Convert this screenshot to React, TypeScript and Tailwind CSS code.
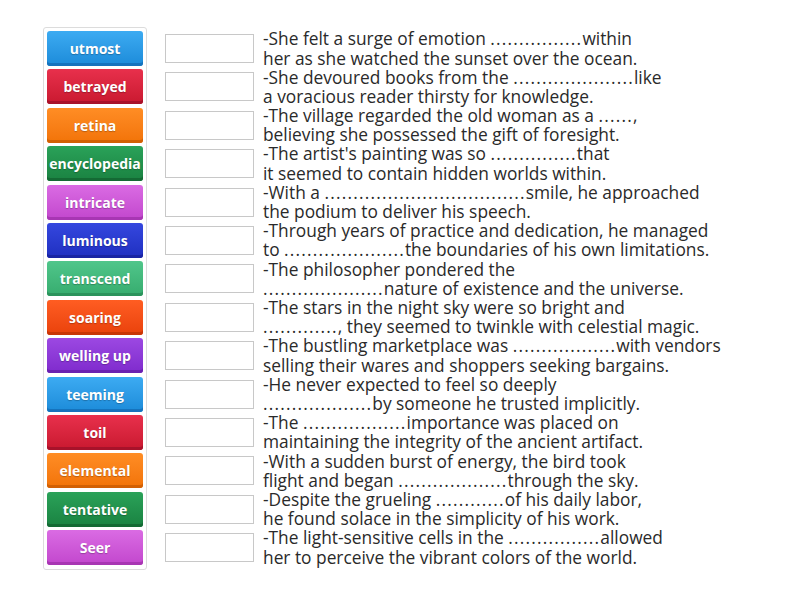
const tiles = [
  { word: 'utmost', cls: 'bg-gradient-to-b from-[#3cabf2] to-[#1b8bd9] shadow-[inset_0_-3px_0_#1573bd]' },
  { word: 'betrayed', cls: 'bg-gradient-to-b from-[#e8304c] to-[#c9182f] shadow-[inset_0_-3px_0_#a8122a]' },
  { word: 'retina', cls: 'bg-gradient-to-b from-[#ff8d24] to-[#f27306] shadow-[inset_0_-3px_0_#d26004]' },
  { word: 'encyclopedia', cls: 'bg-gradient-to-b from-[#2aa259] to-[#1a8241] shadow-[inset_0_-3px_0_#146a34]' },
  { word: 'intricate', cls: 'bg-gradient-to-b from-[#da6be3] to-[#c246cd] shadow-[inset_0_-3px_0_#a836b3]' },
  { word: 'luminous', cls: 'bg-gradient-to-b from-[#3547df] to-[#1f2fc0] shadow-[inset_0_-3px_0_#1924a3]' },
  { word: 'transcend', cls: 'bg-gradient-to-b from-[#50c68b] to-[#36ac6e] shadow-[inset_0_-3px_0_#2b935c]' },
  { word: 'soaring', cls: 'bg-gradient-to-b from-[#ff5d22] to-[#e9410a] shadow-[inset_0_-3px_0_#c93506]' },
  { word: 'welling up', cls: 'bg-gradient-to-b from-[#9c48e2] to-[#7f2acd] shadow-[inset_0_-3px_0_#6a20b0]' },
  { word: 'teeming', cls: 'bg-gradient-to-b from-[#3cabf2] to-[#1b8bd9] shadow-[inset_0_-3px_0_#1573bd]' },
  { word: 'toil', cls: 'bg-gradient-to-b from-[#e8304c] to-[#c9182f] shadow-[inset_0_-3px_0_#a8122a]' },
  { word: 'elemental', cls: 'bg-gradient-to-b from-[#ff8d24] to-[#f27306] shadow-[inset_0_-3px_0_#d26004]' },
  { word: 'tentative', cls: 'bg-gradient-to-b from-[#2aa259] to-[#1a8241] shadow-[inset_0_-3px_0_#146a34]' },
  { word: 'Seer', cls: 'bg-gradient-to-b from-[#da6be3] to-[#c246cd] shadow-[inset_0_-3px_0_#a836b3]' },
];

// a number stands for a run of blank dots
type Seg = string | number;

const sentences: [Seg[], Seg[]][] = [
  [['-She felt a surge of emotion ', 16, 'within'], ['her as she watched the sunset over the ocean.']],
  [['-She devoured books from the ', 21, 'like'], ['a voracious reader thirsty for knowledge.']],
  [['-The village regarded the old woman as a ', 6, ','], ['believing she possessed the gift of foresight.']],
  [["-The artist's painting was so ", 15, 'that'], ['it seemed to contain hidden worlds within.']],
  [['-With a ', 35, 'smile, he approached'], ['the podium to deliver his speech.']],
  [['-Through years of practice and dedication, he managed'], ['to ', 21, 'the boundaries of his own limitations.']],
  [['-The philosopher pondered the'], [21, 'nature of existence and the universe.']],
  [['-The stars in the night sky were so bright and'], [13, ', they seemed to twinkle with celestial magic.']],
  [['-The bustling marketplace was ', 18, 'with vendors'], ['selling their wares and shoppers seeking bargains.']],
  [['-He never expected to feel so deeply'], [19, 'by someone he trusted implicitly.']],
  [['-The ', 18, 'importance was placed on'], ['maintaining the integrity of the ancient artifact.']],
  [['-With a sudden burst of energy, the bird took'], ['flight and began ', 19, 'through the sky.']],
  [['-Despite the grueling ', 12, 'of his daily labor,'], ['he found solace in the simplicity of his work.']],
  [['-The light-sensitive cells in the ', 16, 'allowed'], ['her to perceive the vibrant colors of the world.']],
];

function Line({ segs }: { segs: Seg[] }) {
  return (
    <div>
      {segs.map((s, i) =>
        typeof s === 'number' ? (
          <span key={i} className="tracking-[1.2px]">
            {'.'.repeat(s)}
          </span>
        ) : (
          <span key={i}>{s}</span>
        )
      )}
    </div>
  );
}

export default function App() {
  return (
    <div className="w-[800px] h-[600px] bg-white font-['Open_Sans',sans-serif] flex items-start pl-[43px] pt-[27px]">
      {/* word tiles */}
      <div className="flex flex-col gap-[3.4px] w-[104px] border border-[#dcdcdc] rounded-[3px] px-[3px] pt-[3px] pb-[4px]">
        {tiles.map((t) => (
          <div
            key={t.word}
            className={`h-[35px] rounded-[3px] flex items-center justify-center text-white font-bold text-[14px] [text-shadow:0_1px_1px_rgba(0,0,0,0.25)] ${t.cls}`}
          >
            {t.word}
          </div>
        ))}
      </div>

      {/* targets + prompts */}
      <div className="flex flex-col gap-[3.4px] pt-[4px] ml-[18px]">
        {sentences.map(([a, b], i) => (
          <div key={i} className="h-[35px] flex items-center">
            <div className="w-[89px] h-[29px] border border-[#c8c8c8] bg-white shrink-0" />
            <div className="ml-[9px] text-[17.33px] leading-[19.2px] text-[#2a2a2a] whitespace-nowrap">
              <Line segs={a} />
              <Line segs={b} />
            </div>
          </div>
        ))}
      </div>
    </div>
  );
}
